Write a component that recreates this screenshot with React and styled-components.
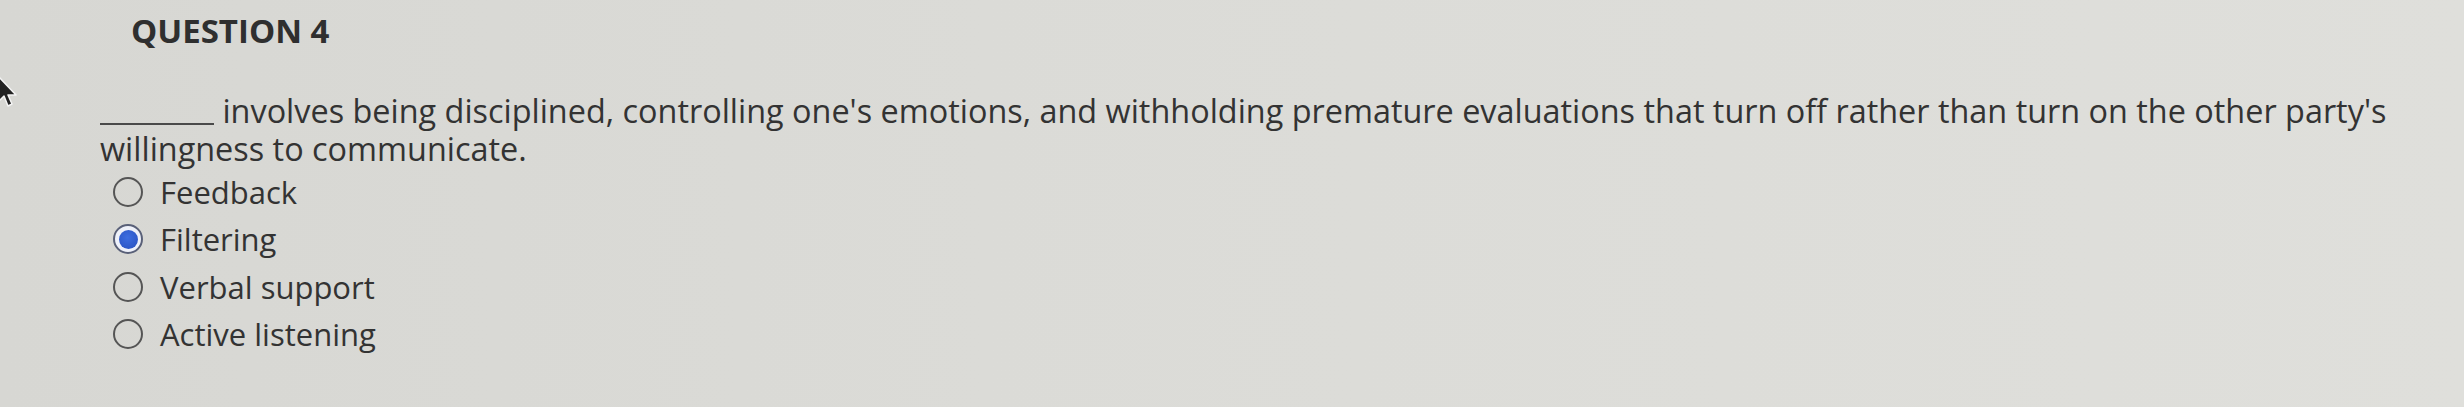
import React from "react";
import styled, { createGlobalStyle } from "styled-components";

const Global = createGlobalStyle`
  html, body { margin: 0; padding: 0; }
  body {
    width: 2464px;
    height: 407px;
    overflow: hidden;
    background: linear-gradient(90deg, #d7d7d3 0%, #dbdbd7 40%, #dfdfdb 100%);
    font-family: "Open Sans", "Noto Sans", sans-serif;
  }
`;

const Page = styled.div`
  position: relative;
  width: 2464px;
  height: 407px;
  box-sizing: border-box;
  padding: 11px 0 0 100px;
  display: flex;
  flex-direction: column;
`;

const Heading = styled.h2`
  margin: 0 0 40px 31px;
  font-size: 33px;
  line-height: 40px;
  font-weight: 700;
  color: #2f2f2f;
`;

const Prompt = styled.p`
  margin: 0 0 1px 0;
  font-size: 32.4px;
  line-height: 38px;
  font-weight: 500;
  color: #333333;
`;

const Blank = styled.span`
  display: inline-block;
  width: 114px;
  height: 2px;
  background: #4a4a4a;
  vertical-align: -2px;
`;

const Options = styled.div`
  display: flex;
  flex-direction: column;
  padding-left: 13px;
`;

const Option = styled.label`
  display: flex;
  align-items: center;
  gap: 17px;
  height: 47.5px;
  font-size: 31px;
  font-weight: 500;
  color: #333333;
`;

const Radio = styled.span`
  box-sizing: border-box;
  width: 30px;
  height: 30px;
  border-radius: 50%;
  flex: none;
  border: 2.5px solid ${(p) => (p.$checked ? "#596078" : "#555555")};
  background: ${(p) => (p.$checked ? "#eef1fa" : "transparent")};
  display: flex;
  align-items: center;
  justify-content: center;
  &::after {
    content: "";
    display: ${(p) => (p.$checked ? "block" : "none")};
    width: 19px;
    height: 19px;
    border-radius: 50%;
    background: radial-gradient(circle at 45% 40%, #3d6de0 0%, #2d58c8 70%, #2a4fb4 100%);
  }
`;

const Cursor = styled.svg`
  position: absolute;
  left: -5px;
  top: 75px;
`;

const options = [
  { label: "Feedback", checked: false },
  { label: "Filtering", checked: true },
  { label: "Verbal support", checked: false },
  { label: "Active listening", checked: false },
];

export default function App() {
  return (
    <>
      <Global />
      <Page>
        <Cursor width="26" height="36" viewBox="0 0 26 36">
          <path
            d="M3 1 L3 27 L9 21 L13 31 L17 29 L13 20 L21 20 Z"
            fill="#222"
            stroke="#f4f4f4"
            strokeWidth="1.5"
            strokeLinejoin="round"
          />
        </Cursor>
        <Heading>QUESTION 4</Heading>
        <Prompt>
          <Blank /> involves being disciplined, controlling one's emotions, and withholding premature
          evaluations that turn off rather than turn on the other party's
          <br />
          willingness to communicate.
        </Prompt>
        <Options>
          {options.map((o) => (
            <Option key={o.label}>
              <Radio $checked={o.checked} />
              {o.label}
            </Option>
          ))}
        </Options>
      </Page>
    </>
  );
}
